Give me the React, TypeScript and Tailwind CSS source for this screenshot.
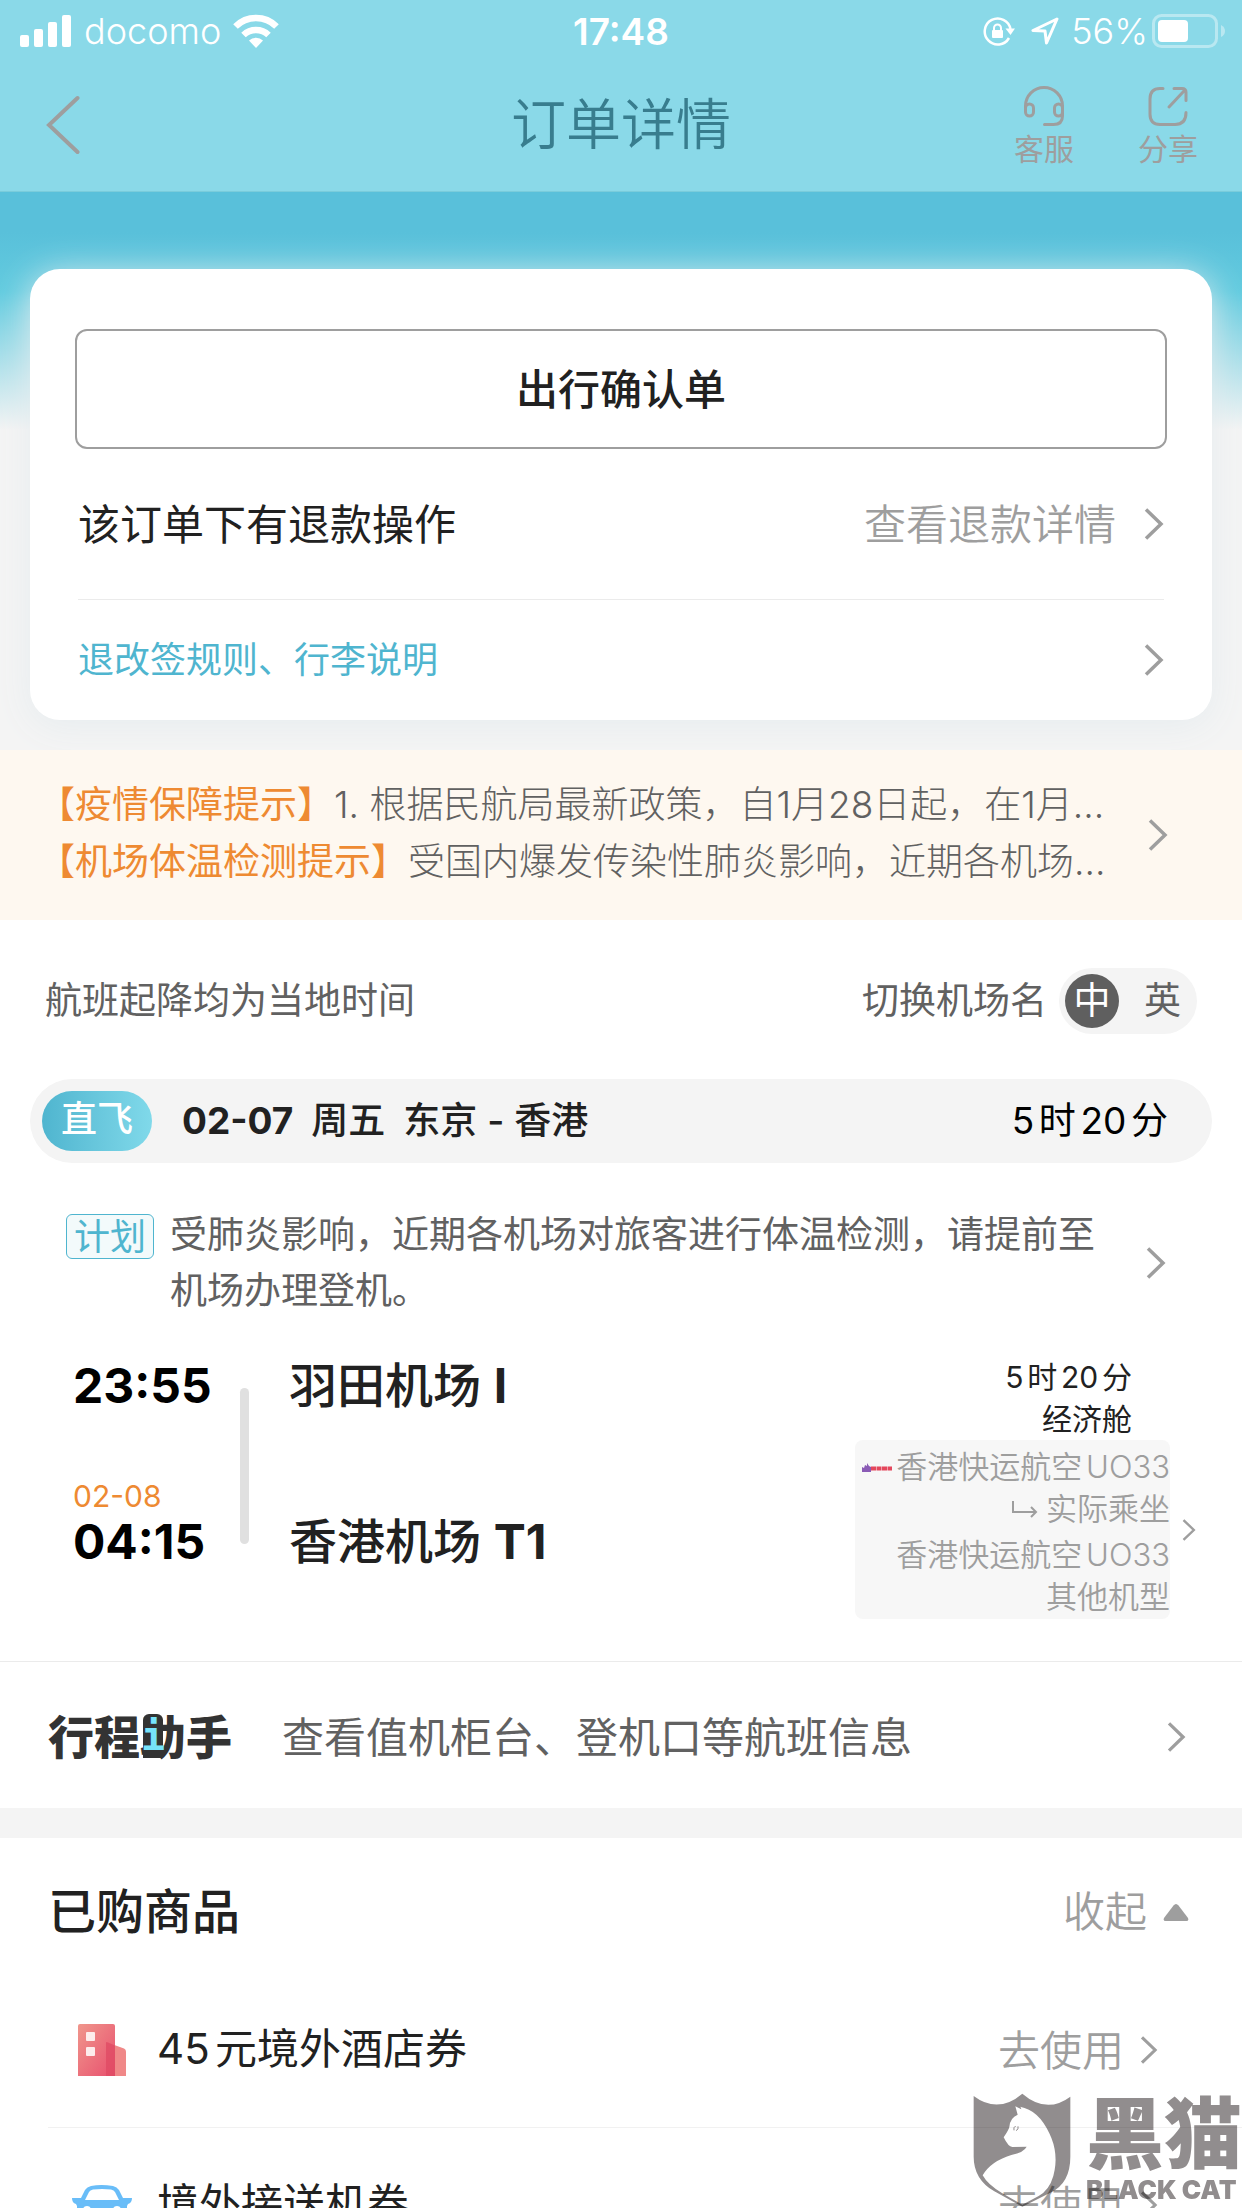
import type { ReactNode } from "react";
import clsx from "clsx";

const coupons = [
  { id: "hotel", name: "45元境外酒店券", icon: <HotelIcon /> },
  { id: "car", name: "境外接送机券", icon: <CarIcon /> },
];

function Chevron({ className }: { className?: string }) {
  return (
    <svg viewBox="0 0 20 32" fill="none" stroke="#9e9e9e" strokeWidth="3.5" className={clsx("shrink-0", className)} aria-hidden>
      <path d="M2 1.5 17 16 2 30.5" />
    </svg>
  );
}

function HotelIcon() {
  return (
    <svg viewBox="0 0 48 52" className="h-[52px] w-12" aria-hidden>
      <defs>
        <linearGradient id="hotel" x1="0" y1="0" x2="1" y2="1">
          <stop offset="0" stopColor="#f0968c" />
          <stop offset="1" stopColor="#e8506e" />
        </linearGradient>
      </defs>
      <path d="M28 18 46 24.5q2 1 2 3V52H28z" fill="#f08888" />
      <path d="M2 0h33q2 0 2 2v50H0V2q0-2 2-2z" fill="url(#hotel)" />
      <path d="M28 19q0-1.500 2-.5l7 3V52h-9z" fill="#df4a63" opacity=".75" />
      <rect x="8" y="8" width="9" height="9" rx="1" fill="#fdecec" />
      <rect x="8" y="23" width="9" height="9" rx="1" fill="#fdecec" />
    </svg>
  );
}

function CarIcon() {
  return (
    <svg viewBox="0 0 60 40" className="h-10 w-[60px]" aria-hidden>
      <path
        fillRule="evenodd"
        fill="#69bdf8"
        d="M9 13 13 5q2-3 6-4 10-2 22 0 4 1 6 4l4 8h9q0 5-4 6l-1 2v19H5V21l-1-2q-4-1-4-6zm4 2h34l-4-8q-1-2-4-2.500-9-1-18 0-3 .5-4 2.500z"
      />
      <circle cx="15" cy="25" r="4" fill="#fff" />
      <circle cx="45" cy="25" r="4" fill="#fff" />
    </svg>
  );
}

function StatusBar() {
  return (
    <div className="grid h-[62px] grid-cols-3 items-center px-4 text-[36px] leading-none text-white">
      <div className="flex items-center pl-1">
        <svg viewBox="0 0 52 32" className="h-8 w-[52px]" fill="#fff" aria-hidden>
          <rect y="20" width="9" height="12" rx="2" />
          <rect x="14" y="14" width="9" height="18" rx="2" />
          <rect x="28" y="7" width="9" height="25" rx="2" />
          <rect x="42" width="9" height="32" rx="2" />
        </svg>
        <span className="ml-3 font-[350]">docomo</span>
        <svg viewBox="0 0 46 34" className="ml-3 h-[34px] w-[46px]" fill="none" stroke="#fff" strokeWidth="6.5" aria-hidden>
          <path d="M2.5 12.5a29 29 0 0 1 41 0" />
          <path d="M10.5 21a18 18 0 0 1 25 0" />
          <path d="M16 26.5a10 10 0 0 1 14 0L23 34z" fill="#fff" stroke="none" />
        </svg>
      </div>
      <span className="text-center text-[37px] font-semibold">17:48</span>
      <div className="flex items-center justify-end">
        <svg viewBox="0 0 32 30" className="h-[30px] w-8" fill="none" stroke="#fff" strokeWidth="2.5" aria-hidden>
          <path d="M27.5 13A13 13 0 1 0 26 22" />
          <path d="M22.5 12.5h9.5L27.5 19z" fill="#fff" stroke="none" />
          <rect x="9" y="14" width="11" height="8" rx="1" fill="#fff" stroke="none" />
          <path d="M11 15v-3a3.500 3.500 0 0 1 7 0v3" strokeWidth="2" />
        </svg>
        <svg viewBox="0 0 28 28" className="ml-4 h-7 w-7" fill="none" stroke="#fff" strokeWidth="3" strokeLinejoin="round" aria-hidden>
          <path d="M26 2 2 13.500l12 .5 1.500 12z" />
        </svg>
        <span className="ml-3 font-[350]">56%</span>
        <svg viewBox="0 0 74 34" className="ml-1 h-[34px] w-[74px]" fill="none" aria-hidden>
          <rect x="1.5" y="1.5" width="63" height="31" rx="8" stroke="#b9e8f1" strokeWidth="3" />
          <rect x="6" y="6" width="30" height="22" rx="4" fill="#fff" />
          <path d="M69 11q4 2 4 6t-4 6z" fill="#b9e8f1" />
        </svg>
      </div>
    </div>
  );
}

function NavAction({ label, children }: { label: string; children: ReactNode }) {
  return (
    <button className="flex flex-col items-center gap-2 text-[30px] leading-[30px] text-[#9e9e9e]">
      <svg viewBox="0 0 40 40" className="h-10 w-10" fill="none" stroke="#9e9e9e" strokeWidth="3" strokeLinecap="round" aria-hidden>
        {children}
      </svg>
      {label}
    </button>
  );
}

function Header() {
  return (
    <header className="border-b border-[#7accdb] bg-[#8ad9e8]">
      <StatusBar />
      <nav className="grid h-[129px] grid-cols-3 items-center pb-1">
        <button aria-label="返回" className="ml-[46px] w-[34px]">
          <svg viewBox="0 0 34 60" className="h-[60px] w-[34px]" fill="none" stroke="#9e9e9e" strokeWidth="4" strokeLinecap="round" aria-hidden>
            <path d="M31.5 3 3 30l28.500 27" />
          </svg>
        </button>
        <h1 className="text-center text-[55px] font-[350] leading-none text-[#387d8e]">订单详情</h1>
        <div className="flex justify-end gap-16 pr-11">
          <NavAction label="客服">
            <path d="M1.5 22v-2a18.500 18.500 0 0 1 37 0v10q0 8.500-9 8.500h-9" />
            <rect x="1.5" y="18" width="8" height="12" rx="4" />
            <rect x="30.5" y="18" width="8" height="12" rx="4" />
          </NavAction>
          <NavAction label="分享">
            <path d="M15 2.500h-3Q2 2.500 2 13v15q0 10.500 10 10.500h15q11 0 11-12" />
            <path d="M26 2.500h8q4 0 4 4v8M36 5 21 21" />
          </NavAction>
        </div>
      </nav>
    </header>
  );
}

function OrderCard() {
  return (
    <section className="bg-[#f4f4f4] bg-[linear-gradient(#59c0da_40px,#62cbdf_100px,#f4f4f4_238px)] px-[30px] pb-[30px] pt-[77px]">
      <div className="rounded-[30px] bg-white px-[45px] pt-[60px] shadow-[0_6px_36px_#e6ecef]">
        <button className="h-[120px] w-full rounded-xl border-2 border-[#9e9e9e] text-[42px] font-medium text-[#212121]">
          出行确认单
        </button>
        <div className="mx-[3px]">
          <a href="#refund" className="flex h-[151px] items-center border-b border-[#ebebeb] text-[42px]">
            <span className="text-[#212121]">该订单下有退款操作</span>
            <span className="ml-auto font-[350] text-[#9e9e9e]">查看退款详情</span>
            <Chevron className="ml-7 h-8 w-5" />
          </a>
          <a href="#rules" className="flex h-[120px] items-center justify-between text-[36px] text-[#4fb5cf]">
            退改签规则、行李说明
            <Chevron className="h-8 w-5" />
          </a>
        </div>
      </div>
    </section>
  );
}

function NoticeBanner() {
  return (
    <a
      href="#notice"
      className="flex h-[170px] items-center bg-[#fef8f0] pl-[38px] pr-[74px] text-[37px] font-light leading-[57px] text-[#616161] [text-autospace:no-autospace]"
    >
      <div className="min-w-0 flex-1 whitespace-nowrap pb-1">
        <p>
          <span className="font-normal text-[#ee8a32]">【疫情保障提示】</span>1. 根据民航局最新政策，自1月28日起，在1月...
        </p>
        <p>
          <span className="font-normal text-[#ee8a32]">【机场体温检测提示】</span>受国内爆发传染性肺炎影响，近期各机场...
        </p>
      </div>
      <Chevron className="h-8 w-5" />
    </a>
  );
}

function Airport({ name, terminal }: { name: string; terminal: string }) {
  return (
    <p className="text-[48px] font-medium leading-[60px] text-[#212121]">
      {name} <span className="font-bold">{terminal}</span>
    </p>
  );
}

function Flight() {
  return (
    <section>
      <div className="flex items-center px-[45px] pt-12 text-[37px] leading-[54px] text-[#616161]">
        <span>航班起降均为当地时间</span>
        <span className="ml-auto">切换机场名</span>
        <div className="ml-3 flex h-[66px] w-[138px] items-center justify-between rounded-full bg-[#f4f4f4] pl-1.5 pr-4">
          <button className="h-[54px] w-[54px] rounded-full bg-[#5f5f5f] text-white" aria-pressed="true">中</button>
          <button aria-pressed="false">英</button>
        </div>
      </div>

      <div className="mx-[30px] mt-[45px] flex h-[84px] items-center rounded-full bg-[#f4f4f4] pl-3 pr-11 text-[37px] font-medium text-[#212121]">
        <span className="flex h-[60px] w-[110px] items-center justify-center rounded-full bg-linear-to-r from-[#4fb5cf] to-[#80d9ea] pb-1 text-[36px] text-white">
          直飞
        </span>
        <span className="ml-[30px] font-bold">02-07</span>
        <span className="ml-[18px]">周五</span>
        <span className="ml-[18px]">东京 - 香港</span>
        <span className="ml-auto font-normal text-black">5时20分</span>
      </div>

      <a href="#plan" className="mt-11 flex items-center pl-[66px] pr-[76px] text-[37px] leading-[56px] text-[#616161]">
        <span className="mt-[7px] flex h-[45px] w-[88px] shrink-0 items-center justify-center self-start rounded-md border border-[#4fb5cf] bg-[#f3fafb] text-[36px] text-[#4fb5cf]">
          计划
        </span>
        <p className="ml-4 w-[935px]">受肺炎影响，近期各机场对旅客进行体温检测，请提前至机场办理登机。</p>
        <Chevron className="ml-auto h-8 w-5" />
      </a>

      <div className="mt-[37px] flex pb-[42px] pl-[73px] pr-[46px]">
        <div className="flex w-[167px] flex-col text-[48px] font-bold leading-[60px] text-black">
          <span>23:55</span>
          <span className="mt-16 text-[30px] font-normal leading-8 text-[#ee8a32]">02-08</span>
          <span>04:15</span>
        </div>
        <div className="mt-8 h-[156px] w-[9px] rounded-full bg-[#e0e0e0]" />
        <div className="ml-10 flex h-[216px] flex-col justify-between">
          <Airport name="羽田机场" terminal="I" />
          <Airport name="香港机场" terminal="T1" />
        </div>
        <div className="ml-auto text-right text-[31px] leading-[42px]">
          <div className="pr-[64px] text-[30px] text-[#212121]">
            <p>5时20分</p>
            <p>经济舱</p>
          </div>
          <a href="#aircraft" className="flex items-center gap-3 font-[350] text-[#9e9e9e]">
            <div className="w-[315px] rounded-lg bg-[#f7f7f7] pb-px pt-1.5">
              <p className="flex items-center justify-between pl-[7px]">
                <svg viewBox="0 0 30 9" className="h-[9px] w-[30px]" aria-hidden>
                  <path d="M0 9V4l2 1 1-3 2 1V0l2 3 2 1v5z" fill="#8a5bb5" />
                  <path d="M9 5.500h21" stroke="#e4475c" strokeWidth="4" strokeDasharray="5 .5" />
                </svg>
                香港快运航空UO33
              </p>
              <p className="flex items-center justify-end gap-2">
                <svg viewBox="0 0 26 18" className="h-[18px] w-[26px]" fill="none" stroke="#9e9e9e" strokeWidth="2" aria-hidden>
                  <path d="M1 1v11h23M19 7l5 5-5 5" />
                </svg>
                实际乘坐
              </p>
              <p className="mt-1">香港快运航空UO33</p>
              <p>其他机型</p>
            </div>
            <Chevron className="h-[22px] w-[14px]" />
          </a>
        </div>
      </div>
    </section>
  );
}

function TripAssistant() {
  return (
    <a href="#assistant" className="flex h-[147px] items-center border-t border-[#ebebeb] pl-12 pr-[56px] pt-1">
      <strong className="relative text-[46px] font-black leading-none text-[#333]">
        行程助手
        <span className="absolute left-[95px] top-0 flex h-11 w-5 items-center justify-center rounded-t-md bg-[#333] font-[DejaVu_Sans_Mono] text-[40px] font-bold text-[#76e3fa]">
          i
        </span>
      </strong>
      <span className="ml-[50px] text-[42px] text-[#616161]">查看值机柜台、登机口等航班信息</span>
      <Chevron className="ml-auto h-[30px] w-[19px]" />
    </a>
  );
}

function Purchased() {
  return (
    <section className="border-t-[30px] border-[#f4f4f4]">
      <div className="flex items-center justify-between pb-[31px] pl-12 pr-[53px] pt-11 leading-[60px]">
        <h2 className="text-[48px] font-medium text-[#212121]">已购商品</h2>
        <button className="flex items-center gap-4 text-[42px] font-[350] text-[#9e9e9e]">
          收起
          <svg viewBox="0 0 26 17" className="h-[17px] w-[26px]" fill="#9e9e9e" aria-hidden>
            <path d="M10.5 1.500q2.500-3 5 0l9.500 12.500q1 3-1.500 3H2.500Q0 17 1 14z" />
          </svg>
        </button>
      </div>
      <ul className="pl-12">
        {coupons.map((c) => (
          <li key={c.id} className="flex h-[155px] items-center border-b border-[#f1f1f1] pr-[84px] text-[42px]">
            <span className="ml-[23px] flex w-[62px] justify-center">{c.icon}</span>
            <span className="ml-6 pb-1 text-[#212121]">{c.name}</span>
            <a href="#use" className="ml-auto flex items-center gap-4 font-[350] text-[#9e9e9e]">
              去使用
              <Chevron className="h-[28px] w-[18px]" />
            </a>
          </li>
        ))}
      </ul>
    </section>
  );
}

function Watermark() {
  return (
    <div className="pointer-events-none fixed bottom-0 right-0 flex items-start gap-3.5 text-[#918d8e] mix-blend-multiply">
      <svg viewBox="95 65 300 348" className="h-[116px] w-[100px]" aria-hidden>
        <path d="M100 77q73 55 146-7 73 62 144 9v180q0 80-60 108l-84 42-84-46q-62-36-62-104z" fill="#918d8e" />
        <path
          d="M225 108l18 9q-1-7-4-8 56 10 88 80 30 62 12 128-12 42-44 60l-49 26-60-34q-44-26-59-54 24-42 86-61 38-8 46-25l-43 1q-12 0-26-29 16-24 17-31 2-28 25-37z"
          fill="#fff"
        />
        <path d="M221 180q-3-9 5-13M227 181q9-4 6-13" stroke="#918d8e" strokeWidth="3" fill="none" />
      </svg>
      <div className="mt-1 flex flex-col">
        <span className="text-[78px] font-black leading-[78px]">黑猫</span>
        <span className="mt-1 text-[26px] font-black leading-6">BLACK CAT</span>
      </div>
    </div>
  );
}

export default function App() {
  return (
    <div className="h-dvh overflow-hidden bg-white font-[Inter,'Noto_Sans_CJK_SC',sans-serif] [text-autospace:normal]" lang="zh-CN">
      <Header />
      <main>
        <OrderCard />
        <NoticeBanner />
        <Flight />
        <TripAssistant />
        <Purchased />
      </main>
      <Watermark />
    </div>
  );
}
